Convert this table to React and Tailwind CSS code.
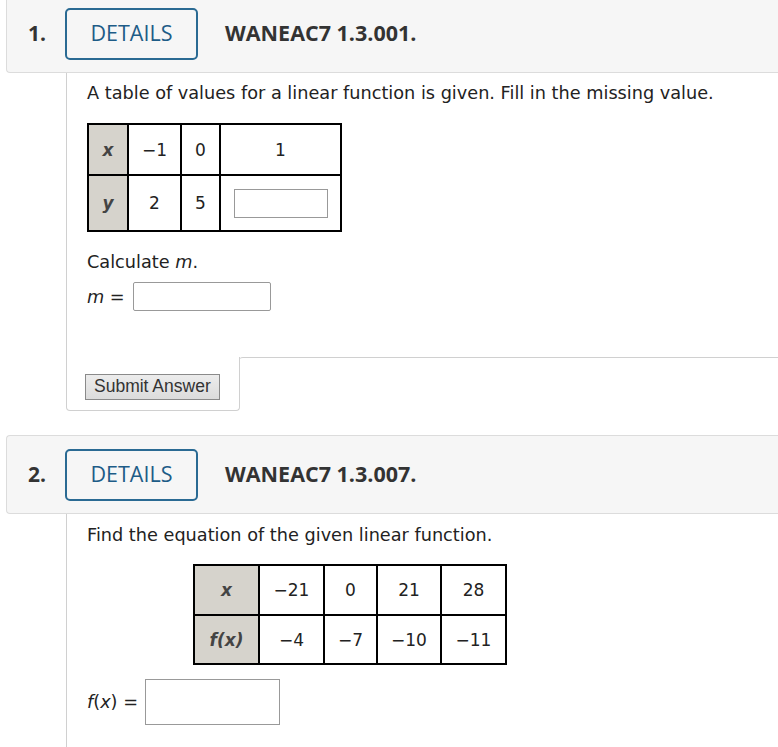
import React from 'react';

const verdana = { fontFamily: '"DejaVu Sans", Verdana, sans-serif' };

function Header({ num, code }) {
  return (
    <div
      className="flex items-center bg-[#f6f6f6] border border-r-0 border-[#dcdcdc] rounded-l-[4px] ml-[6px] h-[79px]"
      style={{ fontFamily: '"Open Sans", sans-serif' }}
    >
      <span className="w-[58px] pl-[21px] text-[21px] font-bold text-[#333]">{num}</span>
      <div className="w-[133px] h-[52px] border-2 border-[#2a6a93] rounded-[5px] flex items-center justify-center text-[21.5px] font-medium text-[#1d5c87]">
        DETAILS
      </div>
      <span className="ml-[27px] text-[21.5px] font-bold text-[#333]">{code}</span>
    </div>
  );
}

function Cell({ children, head, className = '' }) {
  return (
    <td
      className={`border-2 border-black text-center p-0 ${head ? 'bg-[#d6d3cc] font-bold italic text-[#444]' : 'text-[#222]'} ${className}`}
    >
      {children}
    </td>
  );
}

export default function App() {
  return (
    <div className="bg-white w-[778px] h-[747px] overflow-hidden text-[#222]" style={verdana}>
      <div className="-mt-[6px]">
        <Header num="1." code="WANEAC7 1.3.001." />

        {/* Question 1 body */}
        <div className="ml-[66px] border-l border-[#d0d0d0] pl-[20px] pt-[8px] pb-[46px] text-[17.7px] leading-[24px]">
          <p>A table of values for a linear function is given. Fill in the missing value.</p>
          <table className="border-collapse mt-[18px] text-[17px]">
            <tbody>
              <tr className="h-[51px]">
                <Cell head className="w-[40px]">x</Cell>
                <Cell className="w-[53px]">−1</Cell>
                <Cell className="w-[39px]">0</Cell>
                <Cell className="w-[121px]">1</Cell>
              </tr>
              <tr className="h-[56px]">
                <Cell head>y</Cell>
                <Cell>2</Cell>
                <Cell>5</Cell>
                <Cell>
                  <div className="mx-auto w-[94px] h-[29px] border border-[#999] bg-white"></div>
                </Cell>
              </tr>
            </tbody>
          </table>
          <p className="mt-[18px]">
            Calculate <i>m</i>.
          </p>
          <div className="flex items-center mt-[8px]">
            <span><i>m</i> =</span>
            <div className="ml-[8px] w-[138px] h-[29px] border border-[#999] rounded-[2px] bg-white"></div>
          </div>
        </div>
        <div className="flex ml-[66px]">
          <div className="w-[174px] h-[54px] border border-t-0 border-[#d0d0d0] rounded-b-[4px] flex items-end pb-[10px] pl-[18px]">
            <button
              className="h-[26px] px-[8px] border border-[#8a8a8a] bg-gradient-to-b from-[#ececec] to-[#dcdcdc] text-[17.5px] text-[#333] leading-none"
              style={{ fontFamily: '"Liberation Sans", Arial, sans-serif' }}
            >
              Submit Answer
            </button>
          </div>
          <div className="flex-1 border-t border-[#d0d0d0] -ml-px rounded-tl-[4px]"></div>
        </div>

        <div className="h-[24px]"></div>

        <Header num="2." code="WANEAC7 1.3.007." />

        {/* Question 2 body */}
        <div className="ml-[66px] border-l border-[#d0d0d0] pl-[20px] pt-[9px] pb-[40px] text-[17.7px] leading-[24px]">
          <p>Find the equation of the given linear function.</p>
          <table className="border-collapse mt-[17px] ml-[106px] text-[17px]">
            <tbody>
              <tr className="h-[50px]">
                <Cell head className="w-[65px]">x</Cell>
                <Cell className="w-[65px]">−21</Cell>
                <Cell className="w-[53px]">0</Cell>
                <Cell className="w-[64px]">21</Cell>
                <Cell className="w-[65px]">28</Cell>
              </tr>
              <tr className="h-[49px]">
                <Cell head>f(x)</Cell>
                <Cell>−4</Cell>
                <Cell>−7</Cell>
                <Cell>−10</Cell>
                <Cell>−11</Cell>
              </tr>
            </tbody>
          </table>
          <div className="flex items-center mt-[14px]">
            <span>
              <i>f</i>(<i>x</i>) =
            </span>
            <div className="ml-[7px] w-[135px] h-[46px] border border-[#999] bg-white"></div>
          </div>
        </div>
      </div>
    </div>
  );
}
